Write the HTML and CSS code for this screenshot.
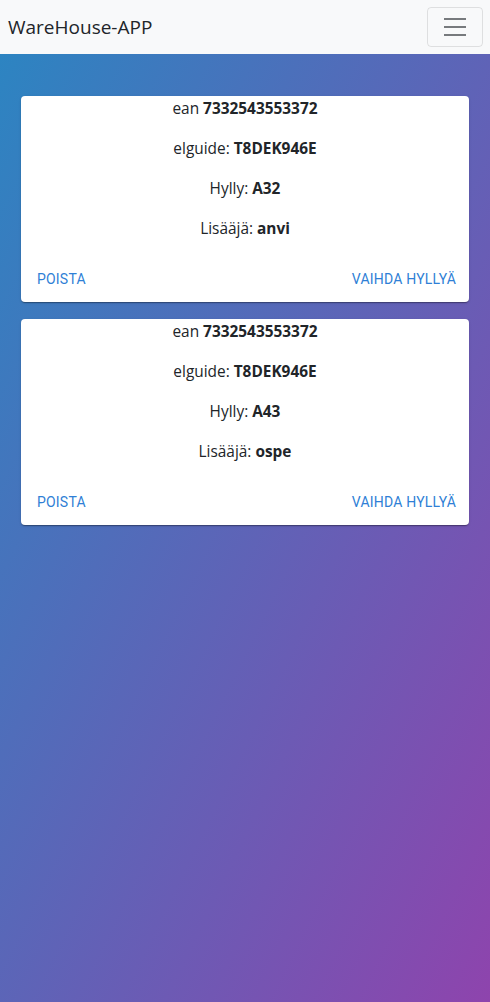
FILE: index.html
```html
<!DOCTYPE html>
<html lang="fi">
<head>
<meta charset="utf-8">
<title>WareHouse-APP</title>
<link rel="stylesheet" href="styles.css">
</head>
<body>
<nav class="navbar">
  <span class="brand">WareHouse-APP</span>
  <button class="toggler" aria-label="Toggle navigation">
    <svg width="30" height="30" viewBox="0 0 30 30"><path d="M4 7h22M4 15h22M4 23h22" stroke="rgba(33,37,41,0.6)" stroke-width="2" stroke-linecap="butt"/></svg>
  </button>
</nav>
<main class="content">
  <div class="card">
    <div class="card-body">
      <p>ean <b>7332543553372</b></p>
      <p>elguide: <b>T8DEK946E</b></p>
      <p>Hylly: <b>A32</b></p>
      <p>Lisääjä: <b>anvi</b></p>
    </div>
    <div class="actions">
      <button class="btn">Poista</button>
      <button class="btn">Vaihda hyllyä</button>
    </div>
  </div>
  <div class="card">
    <div class="card-body">
      <p>ean <b>7332543553372</b></p>
      <p>elguide: <b>T8DEK946E</b></p>
      <p>Hylly: <b>A43</b></p>
      <p>Lisääjä: <b>ospe</b></p>
    </div>
    <div class="actions">
      <button class="btn">Poista</button>
      <button class="btn">Vaihda hyllyä</button>
    </div>
  </div>
</main>
</body>
</html>
```
FILE: styles.css
```css
html, body {
  margin: 0;
  padding: 0;
  min-height: 100%;
}
body {
  min-height: 1002px;
  font-family: "Open Sans", "Noto Sans", sans-serif;
  color: #212529;
  background: linear-gradient(to bottom right, #2a86c2, #8e44ad);
}
.navbar {
  height: 54px;
  box-sizing: border-box;
  background: #f8f9fa;
  display: flex;
  align-items: center;
  justify-content: space-between;
  padding: 0 7px 0 8px;
}
.brand {
  font-size: 19px;
  color: #212529;
  letter-spacing: 0;
}
.toggler {
  width: 56px;
  height: 40px;
  margin-top: -1px;
  background: transparent;
  border: 1px solid rgba(0,0,0,0.1);
  border-radius: 4px;
  display: flex;
  align-items: center;
  justify-content: center;
  padding: 0;
}
.toggler svg { display: block; }
.content {
  padding: 42px 21px;
  display: flex;
  flex-direction: column;
  gap: 17px;
}
.card {
  background: #fff;
  border-radius: 4px;
  box-shadow: 0 2px 1px -1px rgba(0,0,0,.2), 0 1px 1px 0 rgba(0,0,0,.14), 0 1px 3px 0 rgba(0,0,0,.12);
}
.card-body {
  text-align: center;
  font-size: 15.4px;
  padding-top: 1px;
}
.card-body p {
  margin: 0 0 16px;
  line-height: 24px;
}
.card-body b { font-weight: 700; }
.actions {
  display: flex;
  justify-content: space-between;
  padding: 4px 5px 5px 8px;
}
.btn {
  font-family: Roboto, "Liberation Sans", sans-serif;
  font-size: 14px;
  font-weight: 400;
  text-transform: uppercase;
  letter-spacing: 0.2px;
  color: #2f7fd6;
  background: transparent;
  border: 0;
  padding: 6px 8px;
  line-height: 24px;
}
```
